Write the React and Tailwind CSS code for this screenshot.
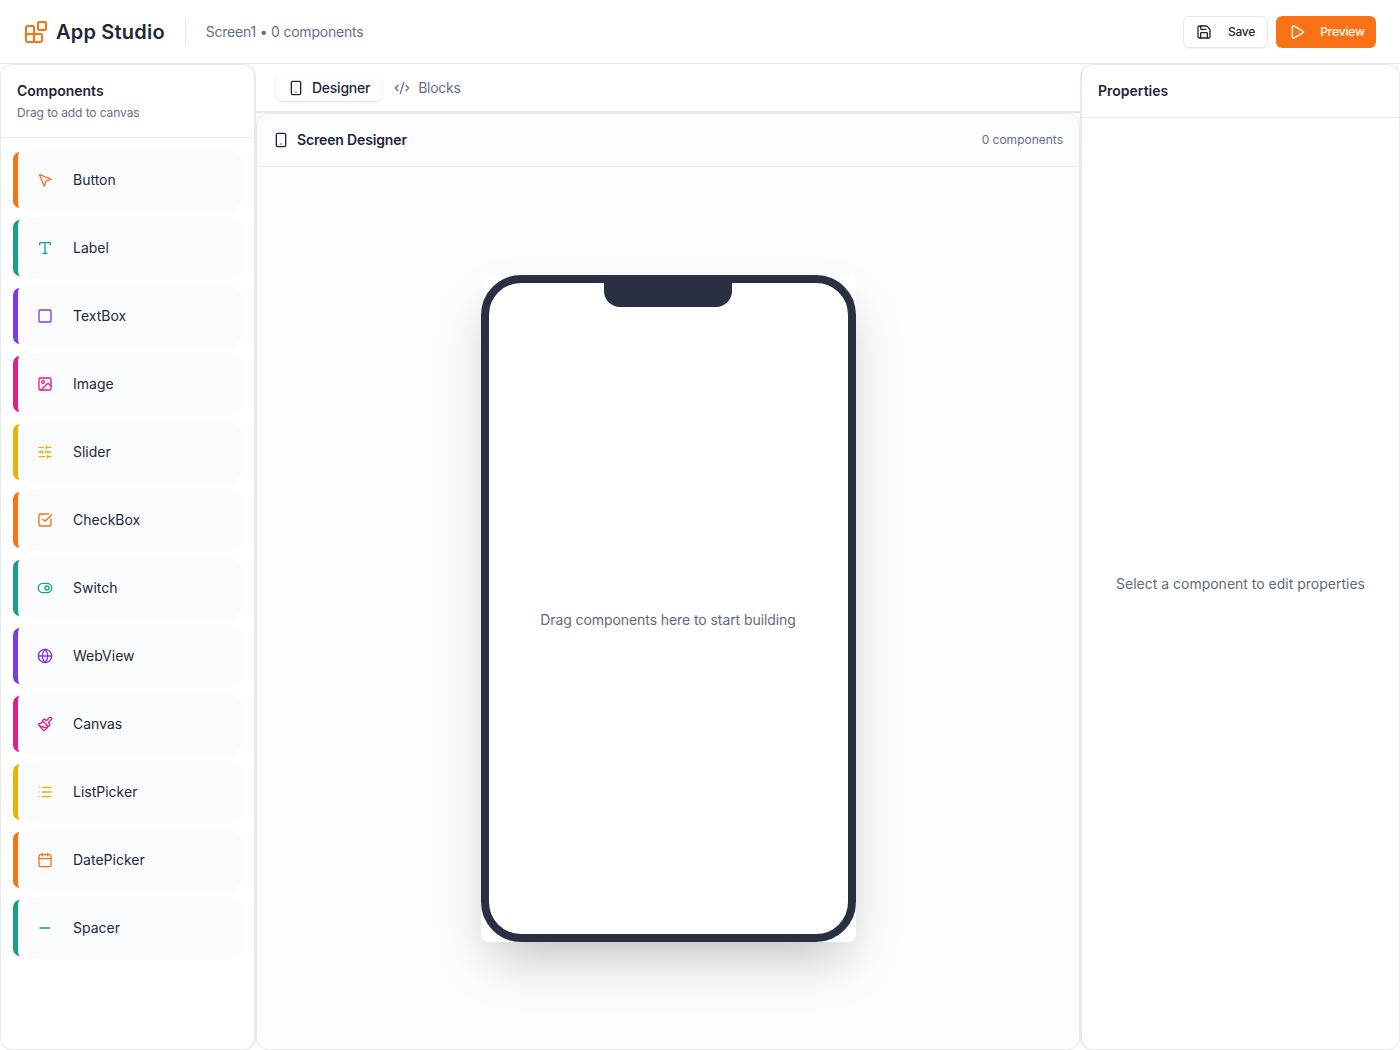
import React from 'react';
import {
    Blocks, Save, Play, Smartphone, CodeXml, MousePointer2, Type, Square, Image,
    SlidersHorizontal, SquareCheckBig, ToggleRight, Globe, Paintbrush, List, Calendar, Minus
} from 'lucide-react';

const palette = {
    orange: { bar: 'border-l-[#f97316]', icon: 'text-[#f97316]' },
    teal: { bar: 'border-l-[#16a085]', icon: 'text-[#16a085]' },
    violet: { bar: 'border-l-[#7c3aed]', icon: 'text-[#7c3aed]' },
    pink: { bar: 'border-l-[#e11d8f]', icon: 'text-[#e11d8f]' },
    yellow: { bar: 'border-l-[#eab308]', icon: 'text-[#eab308]' },
};

const items = [
    { name: 'Button', icon: MousePointer2, color: 'orange' },
    { name: 'Label', icon: Type, color: 'teal' },
    { name: 'TextBox', icon: Square, color: 'violet' },
    { name: 'Image', icon: Image, color: 'pink' },
    { name: 'Slider', icon: SlidersHorizontal, color: 'yellow' },
    { name: 'CheckBox', icon: SquareCheckBig, color: 'orange' },
    { name: 'Switch', icon: ToggleRight, color: 'teal' },
    { name: 'WebView', icon: Globe, color: 'violet' },
    { name: 'Canvas', icon: Paintbrush, color: 'pink' },
    { name: 'ListPicker', icon: List, color: 'yellow' },
    { name: 'DatePicker', icon: Calendar, color: 'orange' },
    { name: 'Spacer', icon: Minus, color: 'teal' },
];

const PaletteItem = ({ name, icon: Icon, color }) => (
    <div className="flex h-[60px] items-center">
        {/* color bar sits apart from the tile */}
        <div className={`h-[56px] w-[7px] shrink-0 rounded-l-[9px] border-l-[5px] ${palette[color].bar}`} />
        <div className="flex h-full flex-1 items-center rounded-xl bg-[#fafbfd] pl-[17px]">
            <Icon className={`h-4 w-4 ${palette[color].icon}`} strokeWidth={2} />
            <span className="ml-5 text-sm text-[#222a39]">{name}</span>
        </div>
    </div>
);

const App = () => {
    return (
        <div className="flex h-[1050px] w-[1400px] flex-col overflow-hidden bg-white font-['Inter',sans-serif]">

            {/* Header */}
            <header className="flex h-16 shrink-0 items-center justify-between border-b border-[#e5e8ee] pl-6 pr-6">
                <div className="flex items-center">
                    <Blocks className="h-6 w-6 text-[#f97316]" />
                    <h1 className="ml-2 text-xl font-semibold tracking-[0.2px] text-[#1f2635]">App Studio</h1>
                    <div className="ml-5 h-6 w-px bg-[#e5e8ee]" />
                    <p className="ml-5 text-sm tracking-[-0.22px] text-[#667085]">Screen1 • 0 components</p>
                </div>
                <div className="flex items-center gap-2">
                    <button className="flex h-8 w-[85px] items-center justify-center gap-4 rounded-md border border-[#e5e8ee] bg-white text-xs font-medium tracking-[-0.3px] text-[#1f2635] shadow-xs">
                        <Save className="h-4 w-4" />
                        Save
                    </button>
                    <button className="flex h-8 w-[100px] items-center justify-center gap-[15px] rounded-md bg-[#f97316] text-xs font-medium tracking-[-0.15px] text-white">
                        <Play className="ml-[2px] h-4 w-4" />
                        Preview
                    </button>
                </div>
            </header>

            <div className="flex min-h-0 flex-1">

                {/* Components panel */}
                <aside className="flex w-[256px] shrink-0 flex-col rounded-xl border border-[#e5e8ee] border-r-2 bg-white">
                    <div className="h-[73px] border-b border-[#e5e8ee] px-4 pt-4">
                        <h2 className="text-sm leading-5 font-semibold text-[#1f2635]">Components</h2>
                        <p className="mt-1 text-xs leading-4 tracking-[-0.1px] text-[#667085]">Drag to add to canvas</p>
                    </div>
                    <div className="flex flex-col gap-2 pt-3 pr-3 pl-3">
                        {items.map(item => <PaletteItem key={item.name} {...item} />)}
                    </div>
                </aside>

                {/* Center */}
                <main className="flex min-w-0 flex-1 flex-col">
                    <div className="flex h-[49px] shrink-0 items-center border-b-2 border-[#e5e8ee] pl-5">
                        <div className="flex h-[27px] items-center gap-2 rounded-md bg-white px-3 text-sm font-medium tracking-[-0.25px] text-[#222a39] shadow-sm">
                            <Smartphone className="h-4 w-4" />
                            Designer
                        </div>
                        <div className="flex h-[27px] items-center gap-2 px-3 text-sm tracking-[-0.25px] text-[#667085]">
                            <CodeXml className="h-4 w-4" />
                            Blocks
                        </div>
                    </div>
                    <section className="flex min-h-0 flex-1 flex-col rounded-xl border border-[#e5e8ee] bg-[#fcfdfe]">
                        <div className="flex h-[53px] shrink-0 items-center justify-between border-b border-[#e5e8ee] px-4">
                            <div className="flex items-center gap-2 text-sm font-semibold tracking-[-0.15px] text-[#1f2635]">
                                <Smartphone className="h-4 w-4" />
                                Screen Designer
                            </div>
                            <span className="text-xs text-[#667085]">0 components</span>
                        </div>
                        <div className="flex flex-1 items-center justify-center">
                            <div className="relative h-[667px] w-[375px] rounded-lg bg-white shadow-2xl">
                                <div className="flex h-full items-center justify-center rounded-[40px] border-8 border-[#2a3041] pt-6">
                                    <p className="text-sm tracking-[-0.08px] text-[#5f6b7a]">Drag components here to start building</p>
                                </div>
                                <div className="absolute top-2 left-1/2 h-6 w-32 -translate-x-1/2 rounded-b-2xl bg-[#2a3041]" />
                            </div>
                        </div>
                    </section>
                </main>

                {/* Properties */}
                <aside className="flex w-[320px] shrink-0 flex-col rounded-xl border border-[#e5e8ee] border-l-2 bg-white">
                    <div className="flex h-[53px] shrink-0 items-center border-b border-[#e5e8ee] px-4">
                        <h2 className="text-sm font-semibold text-[#1f2635]">Properties</h2>
                    </div>
                    <div className="flex flex-1 items-center justify-center">
                        <p className="text-sm text-[#5f6b7a]">Select a component to edit properties</p>
                    </div>
                </aside>
            </div>
        </div>
    );
};

export default App;
